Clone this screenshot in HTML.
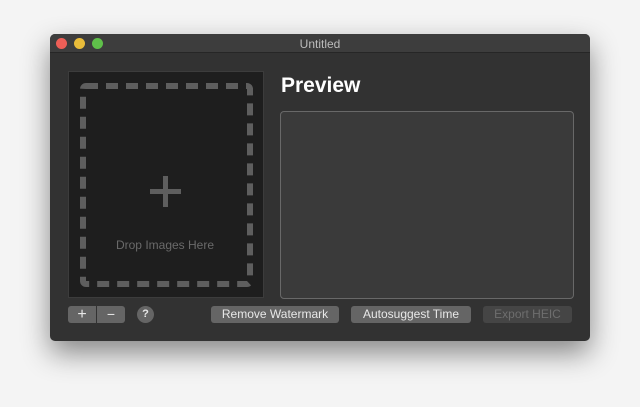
<!DOCTYPE html>
<html><head><style>
body{margin:0;width:640px;height:407px;background:#f4f4f4;position:relative;overflow:hidden;font-family:"Liberation Sans",sans-serif}
.win{position:absolute;left:50px;top:34px;width:540px;height:307px;background:#323232;border-radius:5px;box-shadow:0 12px 28px rgba(0,0,0,.45);overflow:hidden}
.tb{position:absolute;left:0;top:0;width:540px;height:18px;background:#3d3d3d;border-bottom:1px solid #262626}
.dot{position:absolute;top:4px;width:11px;height:11px;border-radius:50%}
.title{position:absolute;top:3px;left:0;width:540px;text-align:center;color:#bcbcbc;font-size:12px}
.drop{position:absolute;left:18px;top:37px;width:194px;height:225px;background:#1e1e1e;border:1px solid #3c3c3c}
.prev{position:absolute;left:230px;top:77px;width:292px;height:186px;background:#3a3a3a;border:1px solid #686868;border-radius:4px}
.h{position:absolute;left:231px;top:40px;color:#fff;font-weight:bold;font-size:21px}
.btn{position:absolute;top:272px;height:17px;background:#656565;border-radius:3px;color:#e8e8e8;font-size:12px;text-align:center;line-height:17px}
</style></head><body>
<div class="win">
<div class="tb">
<div class="dot" style="left:6px;background:#ed5f57"></div>
<div class="dot" style="left:24px;background:#e9bc3a"></div>
<div class="dot" style="left:42px;background:#5fc04a"></div>
<div class="title">Untitled</div>
</div>
<div class="drop">
<svg width="194" height="225" style="position:absolute;left:0;top:0">
<rect x="14" y="14" width="167" height="198" rx="3" fill="none" stroke="#5e5e5e" stroke-width="6" stroke-dasharray="12,8" stroke-linejoin="round"/>
<rect x="81" y="117" width="31" height="5" fill="#5e5e5e"/>
<rect x="94" y="104" width="5" height="31" fill="#5e5e5e"/>
<text x="96" y="177" fill="#6a6a6a" font-size="12" text-anchor="middle" font-family="Liberation Sans">Drop Images Here</text>
</svg>
</div>
<div class="h">Preview</div>
<div class="prev"></div>
<div class="btn" style="left:18px;width:28px;border-radius:3px 0 0 3px;font-size:16px">+</div>
<div class="btn" style="left:47px;width:28px;border-radius:0 3px 3px 0;font-size:14px">&minus;</div>
<div class="btn" style="left:87px;width:17px;border-radius:50%;font-size:11px;font-weight:bold">?</div>
<div class="btn" style="left:161px;width:128px">Remove Watermark</div>
<div class="btn" style="left:301px;width:120px">Autosuggest Time</div>
<div class="btn" style="left:433px;width:89px;background:#454545;color:#6e6e6e">Export HEIC</div>
</div>
</body></html>
